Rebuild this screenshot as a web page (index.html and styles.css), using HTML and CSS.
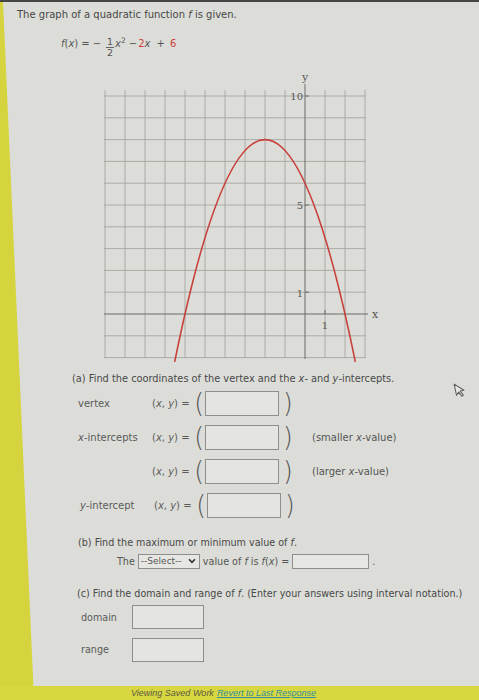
FILE: index.html
```html
<!DOCTYPE html>
<html>
<head>
<meta charset="utf-8">
<link rel="stylesheet" href="styles.css">
</head>
<body>
<div class="page">
  <p class="title">The graph of a quadratic function <i>f</i> is given.</p>
  <div class="formula">
    <span class="fx"><i>f</i>(<i>x</i>)<span class="op">=</span>−</span>
    <span class="frac"><span class="num">1</span><span class="den">2</span></span>
    <span class="fx"><i>x</i><sup>2</sup><span class="op minus">−</span><span class="red">2</span><i>x</i><span class="op wide">+</span><span class="red">6</span></span>
  </div>
  <svg class="graph" width="479" height="300" viewBox="0 68 479 300" xmlns="http://www.w3.org/2000/svg">
    <g stroke="#a5a5a3" stroke-width="0.9">
      <line x1="105" y1="90" x2="105" y2="358"/>
      <line x1="125" y1="90" x2="125" y2="358"/>
      <line x1="145" y1="90" x2="145" y2="358"/>
      <line x1="165" y1="90" x2="165" y2="358"/>
      <line x1="185" y1="90" x2="185" y2="358"/>
      <line x1="205" y1="90" x2="205" y2="358"/>
      <line x1="225" y1="90" x2="225" y2="358"/>
      <line x1="245" y1="90" x2="245" y2="358"/>
      <line x1="265" y1="90" x2="265" y2="358"/>
      <line x1="285" y1="90" x2="285" y2="358"/>
      <line x1="325" y1="90" x2="325" y2="358"/>
      <line x1="345" y1="90" x2="345" y2="358"/>
      <line x1="365" y1="90" x2="365" y2="358"/>
      <line x1="104" y1="96" x2="366" y2="96"/>
      <line x1="104" y1="117.8" x2="366" y2="117.8"/>
      <line x1="104" y1="139.6" x2="366" y2="139.6"/>
      <line x1="104" y1="161.4" x2="366" y2="161.4"/>
      <line x1="104" y1="183.2" x2="366" y2="183.2"/>
      <line x1="104" y1="205" x2="366" y2="205"/>
      <line x1="104" y1="226.8" x2="366" y2="226.8"/>
      <line x1="104" y1="248.6" x2="366" y2="248.6"/>
      <line x1="104" y1="270.4" x2="366" y2="270.4"/>
      <line x1="104" y1="292.2" x2="366" y2="292.2"/>
      <line x1="104" y1="335.8" x2="366" y2="335.8"/>
      <line x1="104" y1="357.6" x2="366" y2="357.6"/>
    </g>
    <g stroke="#6a6a68" stroke-width="1">
      <line x1="305" y1="84" x2="305" y2="359"/>
      <line x1="104" y1="314" x2="368" y2="314"/>
      <line x1="305" y1="96" x2="309" y2="96"/>
      <line x1="305" y1="205" x2="309" y2="205"/>
      <line x1="305" y1="292.2" x2="309" y2="292.2"/>
      <line x1="325" y1="310" x2="325" y2="314"/>
    </g>
    <g class="ax" fill="#555">
      <text x="305" y="81" text-anchor="middle" class="axl">y</text>
      <text x="375" y="318" text-anchor="middle" class="axl">x</text>
      <text x="303" y="100" text-anchor="end">10</text>
      <text x="303" y="209" text-anchor="end">5</text>
      <text x="303" y="296.5" text-anchor="end">1</text>
      <text x="325" y="329" text-anchor="middle">1</text>
    </g>
    <path d="M174.66 361.96 Q265 -82.76 355.34 361.96" fill="none" stroke="#c8403c" stroke-width="1.6"/>
  </svg>

  <p class="q qa">(a) Find the coordinates of the vertex and the <i>x</i>- and <i>y</i>-intercepts.</p>
  <div class="rows">
    <div class="row">
      <span class="lbl">vertex</span>
      <span class="eq">(<i>x</i>, <i>y</i>) =</span>
      <span class="lp">(</span><span class="box"></span><span class="rp">)</span>
      <span class="note"></span>
    </div>
    <div class="row">
      <span class="lbl"><i>x</i>-intercepts</span>
      <span class="eq">(<i>x</i>, <i>y</i>) =</span>
      <span class="lp">(</span><span class="box"></span><span class="rp">)</span>
      <span class="note">(smaller <i>x</i>-value)</span>
    </div>
    <div class="row">
      <span class="lbl"></span>
      <span class="eq">(<i>x</i>, <i>y</i>) =</span>
      <span class="lp">(</span><span class="box"></span><span class="rp">)</span>
      <span class="note">(larger <i>x</i>-value)</span>
    </div>
    <div class="row shift">
      <span class="lbl"><i>y</i>-intercept</span>
      <span class="eq">(<i>x</i>, <i>y</i>) =</span>
      <span class="lp">(</span><span class="box"></span><span class="rp">)</span>
      <span class="note"></span>
    </div>
  </div>

  <p class="q qb">(b) Find the maximum or minimum value of <i>f</i>.</p>
  <div class="brow">
    <span>The</span>
    <span class="select">--Select--<svg class="chev" width="8" height="6" viewBox="0 0 8 6"><path d="M1 1.2 L4 4.3 L7 1.2" fill="none" stroke="#333" stroke-width="1.6"/></svg></span>
    <span>value of <i>f</i> is <i>f</i>(<i>x</i>) =</span>
    <span class="sbox"></span>
    <span>.</span>
  </div>

  <p class="q qc">(c) Find the domain and range of <i>f</i>. (Enter your answers using interval notation.)</p>
  <div class="crow first">
    <span class="clbl">domain</span><span class="cbox"></span>
  </div>
  <div class="crow second">
    <span class="clbl">range</span><span class="cbox"></span>
  </div>
</div>
<footer class="bar">
  <span class="saved">Viewing Saved Work</span>
  <a class="revert" href="#">Revert to Last Response</a>
</footer>
<svg class="cursor" width="12" height="16" viewBox="0 0 12 16" xmlns="http://www.w3.org/2000/svg">
  <path d="M1.5 1 L1.5 12.5 L4.3 9.8 L6.6 14.6 L8.3 13.8 L6 9.1 L9.8 9.1 Z" fill="#e6e6e2" stroke="#5a5a5a" stroke-width="1" stroke-linejoin="round"/>
</svg>
</body>
</html>
```

FILE: styles.css
```css
html, body {
  margin: 0;
  padding: 0;
}
body {
  position: relative;
  width: 479px;
  height: 700px;
  overflow: hidden;
  display: flex;
  flex-direction: column;
  font-family: "DejaVu Sans", Verdana, sans-serif;
  font-size: 10px;
  color: #4a4a4a;
  background: linear-gradient(#454545, #454545) top left / 100% 2px no-repeat, #dcddd8;
}
body::before {
  content: "";
  position: absolute;
  left: 0;
  top: 0;
  width: 40px;
  height: 700px;
  background: #d6d43e;
  clip-path: polygon(0 2px, 3px 2px, 34px 700px, 0 700px);
}
.page {
  flex: 1;
  position: relative;
}
p {
  margin: 0;
}
.title {
  padding-top: 8px;
  margin-left: 17px;
  line-height: 14px;
  color: #474747;
}
.formula {
  margin-top: 8px;
  margin-left: 61px;
  height: 28px;
  display: flex;
  align-items: center;
  line-height: 14px;
  color: #555;
}
.fx sup {
  font-size: 7.5px;
  vertical-align: 4px;
  line-height: 0;
}
.op {
  margin: 0 3px;
}
.op.minus {
  margin: 0 1px 0 3px;
}
.op.wide {
  margin: 0 5px 0 6px;
}
.red {
  color: #cf3f3a;
}
.frac {
  display: inline-flex;
  flex-direction: column;
  align-items: center;
  margin: 6px 1px 0 5px;
  font-size: 9.5px;
  line-height: 10px;
}
.frac .num {
  border-bottom: 1px solid #666;
  padding: 0 1px;
}
.graph {
  display: block;
  margin-top: 10px;
}
.graph text {
  font-family: "DejaVu Serif", "Liberation Serif", serif;
  font-size: 10px;
}
.graph .axl {
  font-size: 11px;
}
.q {
  line-height: 14px;
  color: #484848;
  font-size: 9.6px;
}
.qa {
  margin-top: 4px;
  margin-left: 72px;
  font-size: 9.8px;
}
.rows {
  margin-top: 4.5px;
  display: flex;
  flex-direction: column;
  gap: 9px;
}
.row {
  display: grid;
  grid-template-columns: 74px 41px 12px 74px 33px auto;
  align-items: center;
  height: 25px;
  margin-left: 78px;
}
.row.shift {
  margin-left: 80px;
}
.lbl {
  color: #5a5a5a;
}
.eq {
  color: #5a5a5a;
  white-space: nowrap;
}
.lp, .rp {
  font-family: "DejaVu Sans", sans-serif;
  font-weight: 200;
  font-size: 25px;
  line-height: 25px;
  color: #555555;
  transform: scaleY(1.05);
}
.lp {
  text-align: right;
  padding-right: 1px;
}
.rp {
  padding-left: 4px;
}
.box {
  height: 25px;
  box-sizing: border-box;
  border: 1px solid #8e8e8c;
  background: #e4e5e1;
}
.note {
  color: #555;
  white-space: nowrap;
}
.qb {
  margin-top: 18.5px;
  margin-left: 78px;
}
.brow {
  margin-top: 3.5px;
  margin-left: 117px;
  height: 15px;
  display: flex;
  align-items: center;
  gap: 3px;
  color: #555;
  font-size: 9.6px;
}
.select {
  width: 62px;
  height: 15px;
  box-sizing: border-box;
  border: 1px solid #8e8e8c;
  background: #e6e7e3;
  display: flex;
  align-items: center;
  justify-content: space-between;
  padding: 0 3px 0 2px;
  font-size: 9px;
  color: #555;
}
.chev {
  display: block;
}
.sbox {
  width: 77px;
  height: 15px;
  box-sizing: border-box;
  border: 1px solid #8e8e8c;
  background: #e6e7e3;
}
.qc {
  margin-top: 18.5px;
  margin-left: 77px;
}
.crow {
  display: flex;
  align-items: center;
  height: 24px;
  margin-left: 81px;
  font-size: 9.6px;
}
.crow.first {
  margin-top: 4px;
}
.crow.second {
  margin-top: 8.5px;
}
.clbl {
  width: 51px;
  color: #5a5a5a;
}
.cbox {
  width: 72px;
  height: 24px;
  box-sizing: border-box;
  border: 1px solid #8e8e8c;
  background: #e4e5e1;
}
.bar {
  position: relative;
  height: 14px;
  background: #d9d740;
  display: flex;
  align-items: center;
  padding-left: 131px;
  font-family: "Liberation Sans", Arial, sans-serif;
  font-style: italic;
  font-size: 9px;
  gap: 3px;
}
.saved {
  color: #5b5b44;
}
.revert {
  color: #2f8f9a;
  text-decoration: underline;
}
.cursor {
  position: absolute;
  left: 454px;
  top: 382px;
  transform: rotate(-12deg);
}
```
